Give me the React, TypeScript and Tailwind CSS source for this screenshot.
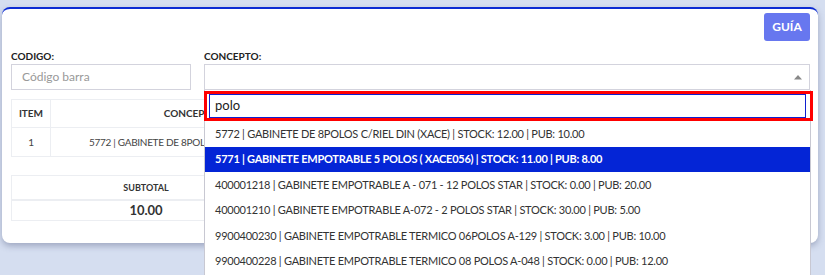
import React from "react";

const options = [
  "5772 | GABINETE DE 8POLOS C/RIEL DIN (XACE) | STOCK: 12.00 | PUB: 10.00",
  "5771 | GABINETE EMPOTRABLE 5 POLOS ( XACE056) | STOCK: 11.00 | PUB: 8.00",
  "400001218 | GABINETE EMPOTRABLE A - 071 - 12 POLOS STAR | STOCK: 0.00 | PUB: 20.00",
  "400001210 | GABINETE EMPOTRABLE A-072 - 2 POLOS STAR | STOCK: 30.00 | PUB: 5.00",
  "9900400230 | GABINETE EMPOTRABLE TERMICO 06POLOS A-129 | STOCK: 3.00 | PUB: 10.00",
  "9900400228 | GABINETE EMPOTRABLE TERMICO 08 POLOS A-048 | STOCK: 0.00 | PUB: 12.00",
];

export default function App() {
  return (
    <div
      className="w-[825px] h-[275px] overflow-hidden bg-[#d5def0] pt-[7px] pl-[2px] text-[#333]"
      style={{ fontFamily: "Lato, 'Noto Sans', sans-serif" }}
    >
      <div className="relative w-[816px] h-[236px] bg-white rounded-[8px] border-t-2 border-[#0b2bd3] shadow-[0_3px_6px_rgba(60,70,110,0.35)] pl-[9px] pr-[8px] pt-[4px]">
        <div className="flex justify-end">
          <button className="w-[46px] h-[28px] rounded-[3px] bg-[#6777ef] text-white text-[12px] font-bold">
            GUÍA
          </button>
        </div>
        <div className="flex gap-[13px] mt-[9px]">
          <div className="w-[180px]">
            <div className="text-[10px] font-bold text-[#222] leading-[12px] h-[14px]">CODIGO:</div>
            <div className="h-[26px] border border-[#d3d3dd] flex items-center px-[10px] text-[12px] text-[#999]">
              Código barra
            </div>
          </div>
          <div className="flex-1 relative">
            <div className="text-[10px] font-bold text-[#222] leading-[12px] h-[14px]">CONCEPTO:</div>
            <div className="h-[26px] border border-[#d3d3dd] flex items-center justify-end pr-[6px]">
              <svg width="10" height="6" viewBox="0 0 10 6">
                <path d="M1 5.5 L5 1 L9 5.5 Z" fill="#888" />
              </svg>
            </div>
            {/* dropdown */}
            <div className="absolute left-0 top-[40px] w-[607px] h-[200px] bg-white border border-[#c8c8d2] border-t-0 z-10">
              <div className="relative px-[4px] pt-[4px] pb-[3px]">
                <div className="h-[24px] border border-[#1020d0] flex items-center px-[5px] text-[13px] text-[#222]">
                  polo
                </div>
                <div className="absolute -left-[1px] top-[1px] w-[609px] h-[30px] border-[3px] border-[#f00]" />
              </div>
              <div className="text-[11px] tracking-[-0.25px]">
                {options.map((o, i) => (
                  <div
                    key={i}
                    className={
                      i === 1
                        ? "h-[25.5px] flex items-center pl-[10px] bg-[#0425d6] text-white font-bold"
                        : "h-[25.5px] flex items-center pl-[10px] text-[#333]"
                    }
                  >
                    {o}
                  </div>
                ))}
              </div>
            </div>
          </div>
        </div>
        <div className="mt-[9px] border border-[#eceef2] w-[799px]">
          <div className="flex h-[28px] border-b border-[#eceef2] text-[10px] font-bold text-[#333]">
            <div className="w-[39px] border-r border-[#eceef2] flex items-center justify-center">ITEM</div>
            <div className="w-[280px] flex items-center justify-center">CONCEPTO</div>
          </div>
          <div className="flex h-[28px] text-[10px] tracking-[-0.3px] text-[#444]">
            <div className="w-[39px] border-r border-[#eceef2] flex items-center justify-center">1</div>
            <div className="w-[400px] whitespace-nowrap flex items-center pl-[38px]">
              5772 | GABINETE DE 8POLOS C/RIEL DIN (XACE)
            </div>
          </div>
        </div>
        <div className="mt-[18px] border border-[#eceef2] w-[799px]">
          <div className="flex h-[25px] border-b-2 border-[#eceef2] text-[9px] font-bold text-[#333]">
            <div className="w-[268px] flex items-center justify-center">SUBTOTAL</div>
          </div>
          <div className="flex h-[19px] text-[13px] font-bold text-[#333]">
            <div className="w-[268px] flex items-center justify-center">10.00</div>
          </div>
        </div>
      </div>
    </div>
  );
}
